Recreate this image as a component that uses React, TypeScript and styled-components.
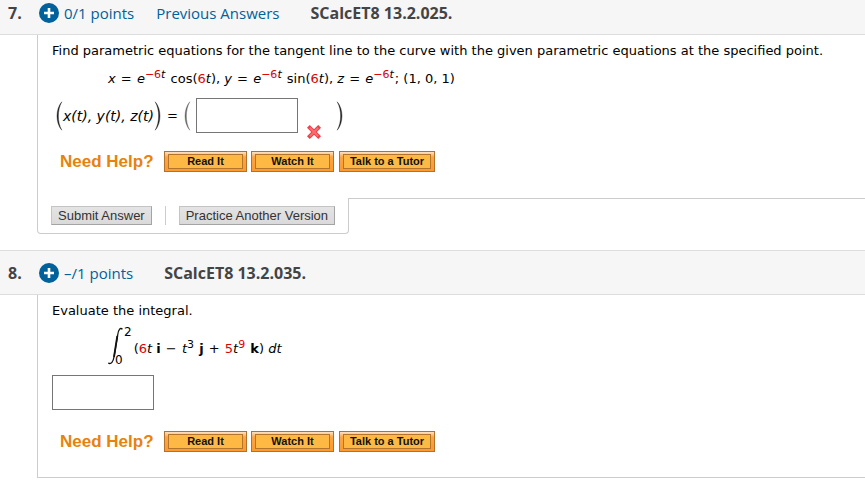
import React from "react";
import styled, { createGlobalStyle } from "styled-components";

const GlobalStyle = createGlobalStyle`
  * { box-sizing: border-box; }
  body {
    margin: 0;
    background: #fff;
    color: #000;
    font-family: Verdana, "DejaVu Sans", sans-serif;
    font-size: 13px;
    line-height: 16px;
  }
`;

const Page = styled.main`
  display: flex;
  flex-direction: column;
`;

const Question = styled.section`
  display: flex;
  flex-direction: column;
`;

const Header = styled.header<{ $first?: boolean }>`
  display: flex;
  align-items: center;
  padding: ${(p) => (p.$first ? "2px 8px 10px" : "11px 8px 10px")};
  background: #f6f6f6;
  border-top: ${(p) => (p.$first ? "0" : "1px solid #ddd")};
  border-bottom: 1px solid #ddd;
  font-family: "Open Sans", sans-serif;
  font-size: 16px;
  line-height: 22px;
  white-space: nowrap;
`;

const Num = styled.span`
  width: 31px;
  font-weight: 700;
  color: #444;
`;

const ExpandButton = styled.button`
  display: flex;
  padding: 0;
  border: 0;
  background: none;
  cursor: pointer;
`;

const HeaderLink = styled.a<{ $gap: number }>`
  margin-left: ${(p) => p.$gap}px;
  font-size: 15px;
  font-weight: 500;
  color: #00619b;
  text-decoration: none;
`;

const Code = styled.h2`
  margin: 0 0 0 31px;
  font-size: 16px;
  line-height: 22px;
  font-weight: 700;
  color: #444;
`;

const Body = styled.div<{ $closed?: boolean }>`
  margin-left: 37px;
  padding: 8px 14px ${(p) => (p.$closed ? 25 : 26)}px;
  border-left: 1px solid #ccc;
  border-bottom: ${(p) => (p.$closed ? "1px solid #ccc" : "0")};
`;

const Prompt = styled.p`
  margin: 0;
  white-space: nowrap;
`;

const MathLine = styled.div`
  display: flex;
  align-items: center;
  margin: 12px 0 0 56px;
  white-space: pre;
`;

const IntegralLine = styled(MathLine)`
  margin: 7px 0 9px 55px;
`;

const Integrand = styled.span`
  padding-top: 5px;
`;

const Sup = styled.sup`
  margin-right: 1px;
  font-size: 11px;
  line-height: 0;
  vertical-align: 5px;
`;

const Op = styled.span`
  margin: 0 1px;
`;

const Red = styled.span`
  color: #e00000;
`;

const Limits = styled.span`
  display: flex;
  flex-direction: column;
  justify-content: space-between;
  height: 40px;
  margin-right: 2px;
  font-size: 12px;
  line-height: 12px;
`;

const LowerLimit = styled.span`
  margin-left: -9px;
`;

const AnswerRow = styled.div`
  display: flex;
  align-items: center;
  margin: 11px 0 18px 3px;
  white-space: pre;
`;

const Tuple = styled.i`
  font-size: 14px;
`;

const Equals = styled.span`
  margin: 0 5px;
`;

const AnswerInput = styled.input`
  display: block;
  width: 102px;
  height: 35px;
  padding: 2px 6px;
  border: 1px solid #767676;
  border-radius: 0;
  background: #fff;
  font: inherit;
`;

const InputSlot = styled.span`
  margin-left: 5px;
`;

const WrongMark = styled.span`
  display: flex;
  align-self: flex-end;
  margin: 0 15px -6px 9px;
`;

const HelpRow = styled.div<{ $top?: number }>`
  display: flex;
  align-items: center;
  gap: 4px;
  margin: ${(p) => p.$top ?? 0}px 0 0 8px;
`;

const HelpLabel = styled.span`
  width: 100px;
  font: bold 17px/21px "Liberation Sans", Arial, sans-serif;
  color: #e8820c;
  white-space: nowrap;
`;

const HelpButton = styled.button<{ $wide?: boolean }>`
  display: flex;
  width: ${(p) => (p.$wide ? 96 : 83)}px;
  height: 21px;
  margin: 0 0 0 ${(p) => (p.$wide ? 1 : 0)}px;
  padding: 2px 3px;
  border: 1px solid #b5702a;
  background: linear-gradient(#fde3c4 0, #fca547 5px, #fc9a2c 100%);
  cursor: pointer;
`;

const HelpFace = styled.span`
  flex: 1;
  border: 1px solid #b5742b;
  background: #fdb944;
  font: bold 11px/13px "Liberation Sans", Arial, sans-serif;
  color: #111;
  white-space: nowrap;
`;

const Footer = styled.div`
  display: flex;
  margin: 0 0 16px 37px;
`;

const Actions = styled.div`
  display: flex;
  align-items: center;
  padding: 8px 13px;
  border: 1px solid #ccc;
  border-top: 0;
  border-radius: 0 0 4px 4px;
`;

const FooterRule = styled.div`
  flex: 1;
  border-top: 1px solid #ccc;
`;

const Divider = styled.span`
  width: 1px;
  height: 19px;
  margin: 0 13px;
  background: #ccc;
`;

const ActionButton = styled.button`
  height: 19px;
  padding: 0 6px;
  border: 1px solid;
  border-color: #c4c4c4 #a4a4a4 #a4a4a4 #c4c4c4;
  background: linear-gradient(#e4e4e4, #dadada);
  font: 13px/16px "Liberation Sans", Arial, sans-serif;
  color: #333;
  white-space: nowrap;
  cursor: pointer;
`;

const PlusIcon = () => (
  <svg width="20" height="20" viewBox="0 0 20 20" aria-hidden="true">
    <circle cx="10" cy="10" r="10" fill="#00619b" />
    <path d="M10 5v10M5 10h10" stroke="#fff" strokeWidth="2.6" />
  </svg>
);

const Paren = ({ close, light }: { close?: boolean; light?: boolean }) => (
  <svg width="8" height="30" viewBox="0 0 8 30" aria-hidden="true">
    <path
      d={close ? "M1.2 .8C7.6 8 7.6 22 1.2 29.2C5.8 21 5.8 9 1.2 .8Z" : "M6.8 .8C.4 8 .4 22 6.8 29.2C2.2 21 2.2 9 6.8 .8Z"}
      fill={light ? "#666" : "#222"}
      stroke={light ? "#666" : "#222"}
      strokeWidth=".4"
    />
  </svg>
);

const CrossIcon = () => (
  <svg width="14" height="14" viewBox="0 0 14 14" role="img" aria-label="Incorrect">
    <path d="M2.8 2.8L11.2 11.2M11.2 2.8L2.8 11.2" stroke="#e8424a" strokeWidth="4" strokeLinecap="square" />
    <path d="M2.8 2.8L11.2 11.2M11.2 2.8L2.8 11.2" stroke="#ff6a6e" strokeWidth="2" />
  </svg>
);

const IntegralIcon = () => (
  <svg width="17" height="38" viewBox="0 0 17 38" aria-hidden="true">
    <path
      d="M15.5 2.2C13.3 .4 11.6 2 10.7 8L7.2 29C6.2 35 4.2 37.6 1.2 36"
      fill="none"
      stroke="#111"
      strokeWidth="1.3"
    />
    <path d="M10.3 9L7 30" stroke="#111" strokeWidth="1.8" />
  </svg>
);

const NeedHelp = ({ top }: { top?: number }) => (
  <HelpRow $top={top}>
    <HelpLabel>Need Help?</HelpLabel>
    <HelpButton type="button"><HelpFace>Read It</HelpFace></HelpButton>
    <HelpButton type="button"><HelpFace>Watch It</HelpFace></HelpButton>
    <HelpButton type="button" $wide><HelpFace>Talk to a Tutor</HelpFace></HelpButton>
  </HelpRow>
);

const ExpTerm = () => (
  <>
    <i>e</i>
    <Sup><Red>−6</Red><i>t</i></Sup>
  </>
);

const SixT = () => (
  <>
    (<Red>6</Red><i>t</i>)
  </>
);

export default function App() {
  return (
    <Page>
      <GlobalStyle />
      <Question>
        <Header $first>
          <Num>7.</Num>
          <ExpandButton type="button" aria-label="Expand question 7"><PlusIcon /></ExpandButton>
          <HeaderLink href="#points-7" $gap={5}>0/1 points</HeaderLink>
          <HeaderLink href="#previous" $gap={22}>Previous Answers</HeaderLink>
          <Code>SCalcET8 13.2.025.</Code>
        </Header>
        <Body>
          <Prompt>
            Find parametric equations for the tangent line to the curve with the given parametric equations at the specified point.
          </Prompt>
          <MathLine>
            <span>
              <i>x</i> <Op>=</Op> <ExpTerm /> cos<SixT />, <i>y</i> <Op>=</Op> <ExpTerm /> sin<SixT />, <i>z</i> <Op>=</Op> <ExpTerm />; (1, 0, 1)
            </span>
          </MathLine>
          <AnswerRow>
            <Paren />
            <Tuple>x(t), y(t), z(t)</Tuple>
            <Paren close />
            <Equals>=</Equals>
            <Paren light />
            <InputSlot><AnswerInput type="text" aria-label="Tangent line components" /></InputSlot>
            <WrongMark><CrossIcon /></WrongMark>
            <Paren close />
          </AnswerRow>
          <NeedHelp />
        </Body>
        <Footer>
          <Actions>
            <ActionButton type="button">Submit Answer</ActionButton>
            <Divider />
            <ActionButton type="button">Practice Another Version</ActionButton>
          </Actions>
          <FooterRule />
        </Footer>
      </Question>
      <Question>
        <Header>
          <Num>8.</Num>
          <ExpandButton type="button" aria-label="Expand question 8"><PlusIcon /></ExpandButton>
          <HeaderLink href="#points-8" $gap={5}>–/1 points</HeaderLink>
          <Code>SCalcET8 13.2.035.</Code>
        </Header>
        <Body $closed>
          <Prompt>Evaluate the integral.</Prompt>
          <IntegralLine>
            <IntegralIcon />
            <Limits>
              <span>2</span>
              <LowerLimit>0</LowerLimit>
            </Limits>
            <Integrand>
              (<Red>6</Red><i>t</i> <b>i</b> <Op>−</Op> <i>t</i><Sup>3</Sup> <b>j</b> <Op>+</Op> <Red>5</Red><i>t</i><Sup><Red>9</Red></Sup> <b>k</b>) <i>dt</i>
            </Integrand>
          </IntegralLine>
          <AnswerInput type="text" aria-label="Value of the integral" />
          <NeedHelp top={21} />
        </Body>
      </Question>
    </Page>
  );
}
